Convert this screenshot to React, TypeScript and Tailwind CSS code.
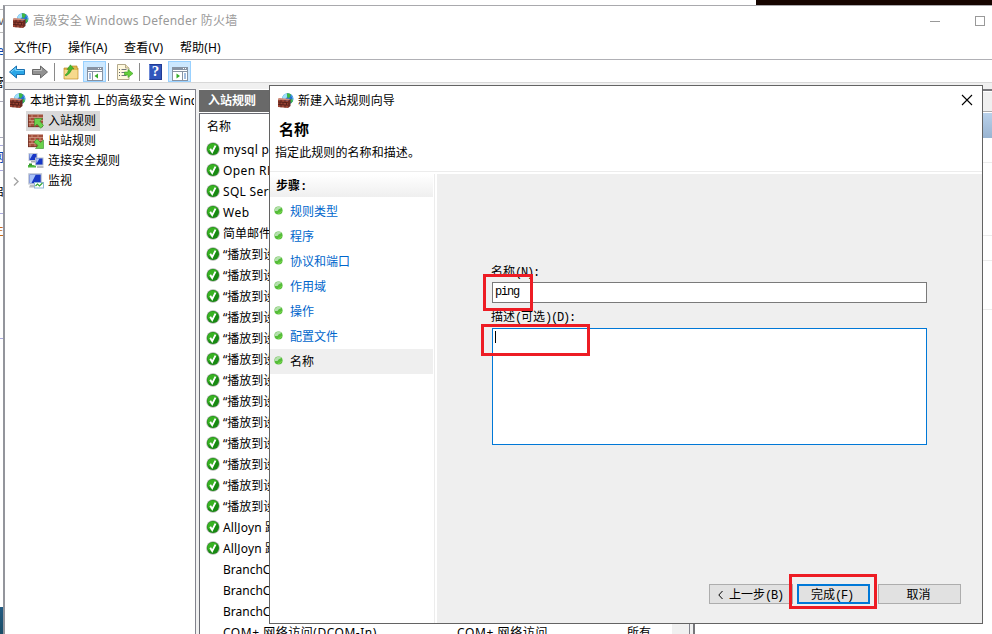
import type { ReactNode } from "react";

const UI = "font-['Noto_Sans','Noto_Sans_CJK_SC',sans-serif]";
const SONG = "font-['Liberation_Mono','Noto_Sans_CJK_SC',monospace]";

function Firewall() {
  return (
    <svg className="block h-4 w-4 shrink-0" viewBox="0 0 16 16">
      <circle cx="9.800" cy="5.800" r="5.600" fill="#2273d2" />
      <path d="M4.300 5.500Q4.500 2 8 .6L10 2 8.500 5 6 7z" fill="#9fe0fb" />
      <path d="M9 .3Q11.500.3 13 1.500L12 4l-2 1.500L9 3zM12 7l2.500-1.500L15 8l-2 2.500z" fill="#3fb844" />
      <path d="M13.500 2.500Q15.500 5 15 7.500" fill="none" stroke="#7fc8f5" strokeWidth=".8" />
      <path d="M10 7.500l2.500-1.500v7L10 15z" fill="#6d2a20" />
      <path d="M0 5.500L1.500 5 12.500 6 10 7.500 0 6.500z" fill="#d08b78" />
      <path d="M0 6.500l10 1V15L0 14z" fill="#9b4434" />
      <path d="M0 8.900l10 .8M0 11.400l10 .8M3 6.800V9M7 7.200v2.300M5 9.300v2.400M2 9v2.300M8.500 9.600v2.400M3 11.700v2.600M7 12v2.600" stroke="#4d1c16" strokeWidth=".8" />
    </svg>
  );
}

function Bricks({ out = false }: { out?: boolean }) {
  return (
    <svg className="block h-4 w-4 shrink-0" viewBox="0 0 16 16">
      <rect y="1.500" width="15" height="12.500" fill="#a3503c" />
      <path d="M0 4.500h15M0 7.500h15M0 10.500h15M4 1.500v3M10 1.500v3M2 4.500v3M7 4.500v3M12 4.500v3M4 7.500v3M10 7.500v3M2 10.500V14M7 10.500V14" stroke="#d39c88" strokeWidth=".8" />
      <path d="M.5 1.500v12.500M0 13.700h15" stroke="#6e3024" strokeWidth=".8" />
      {out ? (
        <path d="M6 9l3-3 3.500 3.500L15.500 7v8.500H7.500L10 12.500z" fill="#6bd24c" stroke="#358f2b" strokeWidth=".6" />
      ) : (
        <path d="M6.500 5.500h8L12 8.200l3.500 4.300-2.800 2.800L9 11l-2.500 2.500z" fill="#6bd24c" stroke="#358f2b" strokeWidth=".6" />
      )}
    </svg>
  );
}

function Computers() {
  return (
    <svg className="block h-4 w-4 shrink-0" viewBox="0 0 16 16">
      <rect x="1" y=".5" width="8" height="7" fill="#1737c6" stroke="#c2c8d3" />
      <path d="M1.500 1h3.500L2 6z" fill="#a5c0f8" />
      <path d="M3 8h4v1.500H3z" fill="#a8acb3" />
      <rect x="7.500" y="5" width="7.500" height="7" fill="#1737c6" stroke="#b5bdca" />
      <path d="M8 5.500h3.500L8.500 10.500z" fill="#a5c0f8" />
      <path d="M9 13h6.500v2H9z" fill="#bcbfc4" />
      <path d="M0 12h5.500l2.500 1v1.500H0z" fill="#4db83f" />
      <path d="M1 10.500h3v2H1z" fill="#318f2a" />
    </svg>
  );
}

function Monitor() {
  return (
    <svg className="block h-4 w-4 shrink-0" viewBox="0 0 16 16">
      <rect x=".9" y=".9" width="12.500" height="10" fill="#1738c4" stroke="#c3cad5" strokeWidth="1.400" />
      <path d="M1.700 1.700h6L3.500 10H1.700z" fill="#a9c2f7" />
      <path d="M2 12h5v2.500H1z" fill="#b9bcc1" />
      <rect x="6.500" y="9.500" width="9" height="5.500" fill="#fff" stroke="#8fb5d6" />
      <path d="M7.500 13l2-2 2 2 3-3" fill="none" stroke="#38a735" strokeWidth="1.200" />
    </svg>
  );
}

function Check() {
  return (
    <svg className="block h-3.5 w-3.5 shrink-0" viewBox="0 0 14 14">
      <circle cx="7" cy="7" r="6.800" fill="#adb3ab" />
      <circle cx="7" cy="7" r="6" fill="#178a11" />
      <path d="M1.300 7a5.700 5.700 0 0 1 10-3.500Q6 4.500 5 10.500 2 10 1.300 7z" fill="#38b222" />
      <path d="M4.200 6.800l2 3.200L9.500 3.600" fill="none" stroke="#fff" strokeWidth="1.900" />
    </svg>
  );
}

function Dot() {
  return (
    <svg className="block h-[9px] w-[9px] shrink-0" viewBox="0 0 9 9">
      <circle cx="4.500" cy="4.500" r="4.100" fill="#56bd3a" />
      <path d="M.5 5A4 4 0 0 1 7.500 2Q4 3 3.500 5z" fill="#b4dfad" />
      <path d="M4 7.500Q6.500 7.500 7.600 5" fill="none" stroke="#7bdc4b" />
    </svg>
  );
}

function Arrow({ forward = false }: { forward?: boolean }) {
  return (
    <svg className="block h-[14px] w-4 shrink-0" viewBox="0 0 16 14">
      {forward ? (
        <path d="M.5 4.500H8.500V1l7 6-7 6V9.500H.5z" fill="#929292" stroke="#696969" />
      ) : (
        <path d="M15.500 4.500H7.500V1L.5 7l7 6V9.500h8z" fill="#2ba6e6" stroke="#1a6fae" />
      )}
      <path d={forward ? "M1.500 5.500H9.500V3" : "M2 7l4.700-4v2.500h8"} fill="none" stroke={forward ? "#bebebe" : "#7bd6ff"} />
    </svg>
  );
}

function Folder() {
  return (
    <svg className="block h-4 w-4 shrink-0" viewBox="0 0 16 16">
      <path d="M1 4h7l1-2h5v2h1v11H1z" fill="#e2b64d" stroke="#bb8a2a" strokeWidth=".7" />
      <path d="M1.500 6h13v8.500h-13z" fill="#f6d98c" />
      <path d="M2 11Q5 9 6 5L4 5.500 7.500.8 11 5 9 4.800Q8 9 3 12z" fill="#48b930" stroke="#2c8c20" strokeWidth=".5" />
    </svg>
  );
}

function PaneIcon({ right = false }: { right?: boolean }) {
  return (
    <svg className="block h-[14px] w-4" viewBox="0 0 16 14">
      <rect x=".5" y=".5" width="15" height="13" fill="#fff" stroke="#8793a3" />
      <path d="M1 1h14v2H1z" fill="#8793a3" />
      <path d="M1 4.500h14" stroke="#8793a3" />
      <path d="M11 1.500h1M13 1.500h1" stroke="#fff" />
      {right ? (
        <>
          <path d="M10.500 5v8" stroke="#8793a3" />
          <path d="M12 7h2M12 9h2M12 11h2" stroke="#497fc2" />
          <path d="M4.500 6.500v5L8 9z" fill="#35ad29" />
        </>
      ) : (
        <>
          <path d="M5.500 5v8" stroke="#8793a3" />
          <path d="M2 7h2M2 9h2M2 11h2" stroke="#497fc2" />
          <path d="M11 6.500v5L7.500 9z" fill="#35ad29" />
        </>
      )}
    </svg>
  );
}

function ExportIcon() {
  return (
    <svg className="block h-4 w-4 shrink-0" viewBox="0 0 16 16">
      <path d="M.5.5h8L12 4v11.500H.5z" fill="#fff9df" stroke="#b3a98b" />
      <path d="M8.500.5V4H12" fill="#eee1b5" stroke="#b3a98b" />
      <path d="M4.500 5.500h5M4.500 8.500h5M4.500 11.500h5" stroke="#72777e" />
      <path d="M2 5.500h1M2 8.500h1M2 11.500h1" stroke="#58606c" />
      <path d="M7.500 8H11V5.500l5 4-5 4V11H7.500z" fill="#64cf38" stroke="#379d23" strokeWidth=".6" />
    </svg>
  );
}

function Help() {
  return (
    <div className="flex h-4 w-[13px] items-center justify-center border border-[#203b95] border-l-[#6c88d5] bg-[#3156bc] font-['Liberation_Serif',serif] text-[15px] leading-none font-bold text-white">
      ?
    </div>
  );
}

const steps = ["规则类型", "程序", "协议和端口", "作用域", "操作", "配置文件", "名称"];
const rules: { text: string; on: boolean; track?: string }[] = [
  { text: "mysql port", on: true, track: "tracking-[0.3px]" },
  { text: "Open RDP", on: true, track: "tracking-[0.4px]" },
  { text: "SQL Server", on: true, track: "tracking-[0.3px]" },
  { text: "Web", on: true, track: "tracking-[0.5px]" },
  { text: "简单邮件", on: true },
  ...Array.from({ length: 13 }, () => ({ text: "“播放到设备", on: true })),
  { text: "AllJoyn 路由器", on: true, track: "tracking-[0.15px]" },
  { text: "AllJoyn 路由器", on: true, track: "tracking-[0.15px]" },
  { text: "BranchCache", on: false },
  { text: "BranchCache", on: false },
  { text: "BranchCache", on: false },
];

function TreeRow({ icon, label, selected = false, chevron = false }: { icon: ReactNode; label: string; selected?: boolean; chevron?: boolean }) {
  return (
    <div className="flex h-5 items-center">
      <div className="flex w-[21px] justify-center pl-px">
        {chevron && (
          <svg className="h-[9px] w-1.5" viewBox="0 0 6 9"><path d="M1 .5l4 4-4 4" fill="none" stroke="#a4a4a4" strokeWidth="1.400" /></svg>
        )}
      </div>
      <div className={selected ? "flex h-5 items-center gap-1 bg-[#d9d9d9] pr-1 pl-0.5" : "flex h-5 items-center gap-1 pr-1 pl-0.5"}>
        {icon}
        <span>{label}</span>
      </div>
    </div>
  );
}

function MainWindow() {
  return (
    <div className="absolute top-[5px] left-[3px] flex h-[640px] w-[1000px] flex-col overflow-hidden border-t border-l-2 border-t-[#a9a9ad] border-l-[#93959c] bg-white">
      <div className="flex h-[30px] shrink-0 items-center pl-2 text-[#999]">
        <div className="mr-1"><Firewall /></div>
        <span className="w-[896px] shrink-0 tracking-[0.28px]">高级安全 Windows Defender 防火墙</span>
        <div className="ml-px h-px w-2.5 shrink-0 bg-[#999]" />
        <div className="ml-[35px] h-2.5 w-2.5 shrink-0 border border-[#999]" />
      </div>
      <div className="flex h-[23px] shrink-0 items-center pl-[9px]">
        <span className="w-[54px]">文件(F)</span>
        <span className="w-14 tracking-[0.1px]">操作(A)</span>
        <span className="w-14 tracking-[0.2px]">查看(V)</span>
        <span className="tracking-[0.1px]">帮助(H)</span>
      </div>
      <div className="flex h-6 shrink-0 items-center border-y border-t-[#b0b0b5] border-b-[#d8d8d8] pt-px pl-1">
        <Arrow />
        <div className="ml-[7px]"><Arrow forward /></div>
        <div className="ml-1.5 h-[18px] w-px bg-[#8a8a8a]" />
        <div className="ml-2"><Folder /></div>
        <div className="ml-1 flex h-[21px] w-[23px] items-center justify-center border border-[#99d1ff] bg-[#cce8ff] pt-1"><PaneIcon /></div>
        <div className="ml-0.5 h-[18px] w-px bg-[#8a8a8a]" />
        <div className="ml-2"><ExportIcon /></div>
        <div className="ml-1.5 h-[18px] w-px bg-[#8a8a8a]" />
        <div className="ml-[9px]"><Help /></div>
        <div className="ml-1.5 flex h-[21px] w-[23px] items-center justify-center border border-[#99d1ff] bg-[#cce8ff] pt-1"><PaneIcon right /></div>
      </div>
      <div className="flex min-h-0 flex-1 bg-[#f0f0f0] pt-1.5">
        <div className="w-[191px] shrink-0 border-t border-r border-[#82838c] bg-white pt-px">
          <div className="flex h-5 items-center gap-1 overflow-hidden pr-px pl-[5px]">
            <Firewall />
            <span className="overflow-hidden tracking-[0.06px]">本地计算机 上的高级安全 Windows</span>
          </div>
          <TreeRow icon={<Bricks />} label="入站规则" selected />
          <TreeRow icon={<Bricks out />} label="出站规则" />
          <TreeRow icon={<Computers />} label="连接安全规则" />
          <TreeRow icon={<Monitor />} label="监视" chevron />
        </div>
        <div className="ml-[3px] flex w-[491px] shrink-0 flex-col border-r border-[#82838c] bg-white">
          <div className="mt-px flex h-[22px] shrink-0 items-center bg-[#696969] pl-[9px] font-bold text-white">入站规则</div>
          <div className="mt-px flex min-h-0 flex-1 border-t border-l border-[#696b73] bg-white">
            <div className="flex w-[472px] shrink-0 flex-col">
              <div className="flex h-[25px] shrink-0 items-center pl-[7px]">名称</div>
              {rules.map((r, i) => (
                <div key={i} className="flex h-[21px] shrink-0 items-center pl-1.5">
                  <div className="w-[17px] pb-px">{r.on && <Check />}</div>
                  <span className={r.track}>{r.text}</span>
                </div>
              ))}
              <div className="flex h-[21px] shrink-0 items-center pl-[23px]">
                <span className="w-[234px] tracking-[0.52px]">COM+ 网络访问(DCOM-In)</span>
                <span className="w-[170px] tracking-[0.6px]">COM+ 网络访问</span>
                <span>所有</span>
              </div>
            </div>
            <div className="w-[17px] bg-[#f0f0f0]" />
          </div>
        </div>
        <div className="ml-[3px] flex w-[310px] flex-col border-t-2 border-l-2 border-[#77777b] bg-white">
          <div className="mt-px h-5 border-b border-[#aaa] bg-[#f0f0f0]" />
          <div className="mt-px h-[25px] bg-gradient-to-b from-[#b9d1ea] to-[#99b4d1]" />
          <div className="h-[25px] border-b border-[#ececec]" />
          <div className="h-[73px] border-b border-[#ececec]" />
          <div className="h-[25px] border-b border-[#ececec]" />
          <div className="h-[49px] border-b border-[#ececec]" />
        </div>
      </div>
    </div>
  );
}

const LATIN = "tracking-[-1.2px]";

function Wizard() {
  return (
    <div className="absolute top-[85px] left-[269px] flex h-[539px] w-[714px] flex-col border border-[#636363] bg-white">
      <div className="flex h-[29px] shrink-0 items-center gap-1 pl-2">
        <Firewall />
        <span className="tracking-[0.12px]">新建入站规则向导</span>
        <svg className="mr-[9px] mb-px ml-auto h-3 w-3" viewBox="0 0 12 12"><path d="M1 1l10 10M11 1L1 11" stroke="#000" strokeWidth="1.100" /></svg>
      </div>
      <div className="flex h-[57px] shrink-0 flex-col border-b border-[#ececec]">
        <span className="mt-1 pl-[9px] text-[15px] leading-[20px] font-bold">名称</span>
        <span className="mt-[5px] pl-[5px] leading-[18px] tracking-[0.08px]">指定此规则的名称和描述。</span>
      </div>
      <div className="mt-0.5 flex min-h-0 flex-1">
        <div className="w-[165px] shrink-0 border-r border-[#ececec]">
          <div className="mr-px flex h-[23px] items-center bg-gradient-to-b from-white to-[#efefef] pl-1.5 font-bold">步骤<span className="pl-0.5">:</span></div>
          <div className="pt-[2px]">
            {steps.map((s, i) => (
              <div key={s} className={i === 6 ? "mr-[1px] flex h-[25px] items-center bg-[#efefef] pl-1 text-black" : "flex h-[25px] items-center pl-1 text-[#0066cc]"}>
                <div className="mr-[7px] pb-0.5"><Dot /></div>
                <span>{s}</span>
              </div>
            ))}
          </div>
        </div>
        <div className="ml-0.5 flex flex-1 flex-col bg-[#efefef] pl-[55px]">
          <div className={`${SONG} -ml-px mt-[90px] h-[18px] text-xs leading-[18px]`}>
            名称<span className={LATIN}>(N):</span>
          </div>
          <div className={`${SONG} flex h-[21px] w-[435px] items-center border border-[#7a7a7a] bg-white pl-0.5 text-xs tracking-[-1.2px]`}>
            <span className="pb-0.5">ping</span>
          </div>
          <div className={`${SONG} -ml-px mt-[6px] h-[19px] text-xs leading-[19px]`}>
            描述<span className={LATIN}>(</span>可选<span className={LATIN}>)(D):</span>
          </div>
          <div className="h-[117px] w-[435px] border border-[#0078d7] bg-white pt-0.5 pl-0.5">
            <div className="h-3 w-px bg-black" />
          </div>
          <div className={`${SONG} mt-[139px] flex h-5 pl-[217px]`}>
            <div className="flex w-[84px] items-center border border-[#adadad] bg-[#e1e1e1] pt-[3px] pl-2">
              <svg className="mr-[6px] mb-0.5 h-2 w-[5px]" viewBox="0 0 5 8"><path d="M4.500 0L.8 4l3.700 4" fill="none" stroke="#000" /></svg>
              上一步<span className={LATIN}>(B)</span>
            </div>
            <div className="ml-1 flex w-[73px] items-center justify-center border-2 border-[#0078d7] bg-[#e1e1e1] pt-[3px] pr-[3px]">
              完成<span className={LATIN}>(F)</span>
            </div>
            <div className="ml-2 flex w-[83px] items-center justify-center border border-[#adadad] bg-[#e1e1e1] pt-[3px] pr-0.5">取消</div>
          </div>
        </div>
      </div>
    </div>
  );
}

export default function App() {
  return (
    <div className={`${UI} relative h-[634px] w-[992px] overflow-hidden bg-white text-xs whitespace-nowrap text-black`}>
      <div className="flex h-[5px] justify-end"><div className="w-[944px]" /><div className="w-[236px] shrink-0 bg-[#160500]" /></div>
      <div className="flex w-[4px] flex-col overflow-hidden">
        <div className="h-[5px] border-b border-[#bbb]" />
        <div className="flex h-[22px] items-center justify-end text-[#555]">v</div>
        <div className="h-[9px] border-t border-[#bbb]" />
        <div className="flex h-5 items-center justify-end text-[#0645ad]">e</div>
        <div className="mt-3 flex h-5 items-center justify-end">管</div>
        <div className="mt-2 h-[37px] border-y border-[#aab]" />
        <div className="h-2 border-b border-[#aaaadd]" />
        <div className="flex h-[24px] items-center justify-end text-[#0645ad]">网</div>
        <div className="h-3 border-t border-[#aaaadd]" />
        <div className="flex h-5 items-center justify-end">启</div>
        <div className="h-3 border-b border-[#aaaadd]" />
        <div className="flex h-[34px] items-center justify-end text-[#c66b18]">主</div>
        <div className="h-[91px] border-b border-[#aaaadd]" />
        <div className="mt-[268px] h-8 bg-gradient-to-b from-[#235c83] to-[#174a61]" />
      </div>
      <MainWindow />
      <Wizard />
      <div className="absolute top-[274px] left-[483px] h-[37px] w-[50px] border-3 border-[#ed1c24]" />
      <div className="absolute top-[324px] left-[481px] h-8 w-[109px] border-3 border-[#ed1c24]" />
      <div className="absolute top-[574px] left-[789px] h-[35px] w-[88px] border-3 border-[#ed1c24]" />
    </div>
  );
}
